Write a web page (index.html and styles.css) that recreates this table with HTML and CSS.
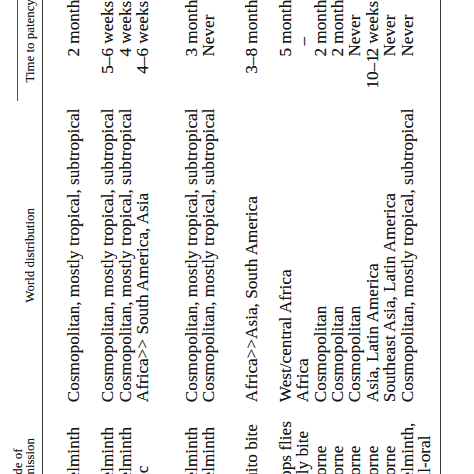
FILE: index.html
```html
<!DOCTYPE html>
<html lang="en">
<head>
<meta charset="utf-8">
<title>Helminth table</title>
<link rel="stylesheet" href="styles.css">
</head>
<body>
<div class="stage">
  <div class="rot">
    <table class="tbl">
      <thead>
        <tr>
          <th class="m">Mode of<br>transmission</th>
          <th class="w">World distribution</th>
          <th class="t"><div class="spanner">Time to patency</div></th>
        </tr>
      </thead>
      <tbody>
        <tr class="g-first">
          <td class="m">Soil helminth</td>
          <td class="w">Cosmopolitan, mostly tropical, subtropical</td>
          <td class="t"><div class="tp"><span class="pre"></span><span>2 months</span></div></td>
        </tr>
        <tr class="g-a">
          <td class="m">Soil helminth</td>
          <td class="w">Cosmopolitan, mostly tropical, subtropical</td>
          <td class="t"><div class="tp"><span class="pre">5–</span><span>6 weeks</span></div></td>
        </tr>
        <tr>
          <td class="m">Soil helminth</td>
          <td class="w">Cosmopolitan, mostly tropical, subtropical</td>
          <td class="t"><div class="tp"><span class="pre"></span><span>4 weeks</span></div></td>
        </tr>
        <tr>
          <td class="m">Aquatic</td>
          <td class="w">Africa&gt;&gt; South America, Asia</td>
          <td class="t"><div class="tp"><span class="pre">4–</span><span>6 weeks</span></div></td>
        </tr>
        <tr class="g-b">
          <td class="m">Soil helminth</td>
          <td class="w">Cosmopolitan, mostly tropical, subtropical</td>
          <td class="t"><div class="tp"><span class="pre"></span><span>3 months</span></div></td>
        </tr>
        <tr>
          <td class="m">Soil helminth</td>
          <td class="w">Cosmopolitan, mostly tropical, subtropical</td>
          <td class="t"><div class="tp"><span class="pre"></span><span>Never</span></div></td>
        </tr>
        <tr class="g-c">
          <td class="m">Mosquito bite</td>
          <td class="w">Africa&gt;&gt;Asia, South America</td>
          <td class="t"><div class="tp"><span class="pre">3–</span><span>8 months</span></div></td>
        </tr>
        <tr class="g-d">
          <td class="m">Chrysops flies</td>
          <td class="w">West/central Africa</td>
          <td class="t"><div class="tp"><span class="pre"></span><span>5 months</span></div></td>
        </tr>
        <tr>
          <td class="m">Blackfly bite</td>
          <td class="w">Africa</td>
          <td class="t"><div class="tp"><span class="pre"></span><span class="dash">–</span></div></td>
        </tr>
        <tr>
          <td class="m">Foodborne</td>
          <td class="w">Cosmopolitan</td>
          <td class="t"><div class="tp"><span class="pre"></span><span>2 months</span></div></td>
        </tr>
        <tr>
          <td class="m">Foodborne</td>
          <td class="w">Cosmopolitan</td>
          <td class="t"><div class="tp"><span class="pre"></span><span>2 months</span></div></td>
        </tr>
        <tr>
          <td class="m">Foodborne</td>
          <td class="w">Cosmopolitan</td>
          <td class="t"><div class="tp"><span class="pre"></span><span>Never</span></div></td>
        </tr>
        <tr>
          <td class="m">Foodborne</td>
          <td class="w">Asia, Latin America</td>
          <td class="t"><div class="tp"><span class="pre">10–1</span><span>2 weeks</span></div></td>
        </tr>
        <tr>
          <td class="m">Foodborne</td>
          <td class="w">Southeast Asia, Latin America</td>
          <td class="t"><div class="tp"><span class="pre"></span><span>Never</span></div></td>
        </tr>
        <tr class="last">
          <td class="m">Soil helminth,<br>or fecal-oral</td>
          <td class="w">Cosmopolitan, mostly tropical, subtropical</td>
          <td class="t"><div class="tp"><span class="pre"></span><span>Never</span></div></td>
        </tr>
      </tbody>
    </table>
  </div>
</div>
</body>
</html>
```

FILE: styles.css
```css
html, body {
  margin: 0;
  padding: 0;
  background: #ffffff;
}

.stage {
  width: 474px;
  height: 474px;
  overflow: hidden;
  background: #ffffff;
}

.rot {
  width: 474px;
  height: 474px;
  transform: rotate(-90deg);
}

.tbl {
  margin-left: -46px;
  border-collapse: separate;
  border-spacing: 0;
  font-family: "Liberation Serif", "Times New Roman", serif;
  color: #141414;
  white-space: nowrap;
  text-shadow: 0 0 0.5px rgba(0, 0, 0, 0.45);
}

.tbl th {
  font-weight: normal;
  font-size: 12.9px;
  line-height: 12px;
  vertical-align: bottom;
  text-align: center;
  padding: 0 0 6px 0;
  border-bottom: 1.6px solid #383838;
}

.tbl td {
  font-size: 17.2px;
  line-height: 17.4px;
  vertical-align: top;
  text-align: left;
  padding: 0;
}

.tbl .m {
  width: 101px;
  padding-right: 19px;
}

.tbl th.m {
  padding-top: 12px;
}

.tbl .w {
  width: 295px;
  padding-right: 8px;
}

.tbl .t {
  width: 90px;
  padding-left: 12px;
}

.spanner {
  margin-left: -12px;
  padding-left: 12px;
  padding-top: 6px;
  border-top: 1px solid #4a4a4a;
}

.tp {
  display: grid;
  grid-template-columns: 32px auto;
}

.pre {
  text-align: right;
}

.dash {
  padding-left: 11px;
}

.g-first td { padding-top: 22px; }
.g-a td { padding-top: 17px; }
.g-b td { padding-top: 31px; }
.g-c td { padding-top: 26px; }
.g-d td { padding-top: 16px; }

.last td {
  padding-bottom: 6px;
  border-bottom: 1.6px solid #383838;
}
```
